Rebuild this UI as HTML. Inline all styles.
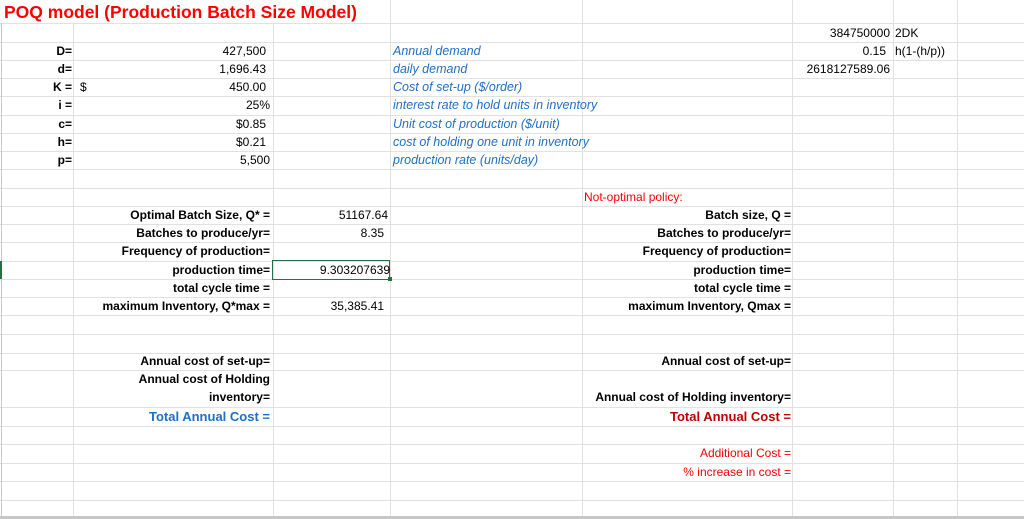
<!DOCTYPE html>
<html><head><meta charset="utf-8"><style>
body{margin:0;width:1024px;height:519px;overflow:hidden;background:#fff;font-family:"Liberation Sans",Arial,sans-serif;font-size:12px;color:#000;position:relative}
.h{position:absolute;left:0;width:1024px;height:1px;background:#e1e1e1}
.v{position:absolute;top:0;height:516px;width:1px;background:#e1e1e1}
.t{position:absolute;white-space:nowrap;line-height:19px;height:19px}
.r{text-align:right}
.b{font-weight:bold}
.i{font-style:italic;color:#1f6fc5;font-size:12.5px}
.red{color:#ff0000}
</style></head><body>
<div class="h" style="top:23px"></div><div class="h" style="top:42px"></div><div class="h" style="top:60px"></div><div class="h" style="top:78px"></div><div class="h" style="top:96px"></div><div class="h" style="top:115px"></div><div class="h" style="top:133px"></div><div class="h" style="top:151px"></div><div class="h" style="top:169px"></div><div class="h" style="top:188px"></div><div class="h" style="top:206px"></div><div class="h" style="top:224px"></div><div class="h" style="top:242px"></div><div class="h" style="top:261px"></div><div class="h" style="top:279px"></div><div class="h" style="top:297px"></div><div class="h" style="top:315px"></div><div class="h" style="top:334px"></div><div class="h" style="top:353px"></div><div class="h" style="top:370px"></div><div class="h" style="top:407px"></div><div class="h" style="top:426px"></div><div class="h" style="top:444px"></div><div class="h" style="top:463px"></div><div class="h" style="top:481px"></div><div class="h" style="top:500px"></div>
<div class="v" style="left:1px;background:#c8c8c8"></div><div class="v" style="left:73px"></div><div class="v" style="left:273px"></div><div class="v" style="left:390px"></div><div class="v" style="left:582px"></div><div class="v" style="left:792px"></div><div class="v" style="left:893px"></div><div class="v" style="left:957px"></div>
<div style="position:absolute;left:0;top:0;width:390px;height:23px;background:#fff"></div>
<div style="position:absolute;left:0;top:516px;width:1024px;height:3px;background:#c6c6c6"></div>
<div style="position:absolute;left:0;top:261px;width:2px;height:18px;background:#217346"></div>
<div class="t b red" style="left:4px;top:1px;font-size:17.5px;line-height:22px;height:22px">POQ model (Production Batch Size Model)</div>

<div class="t b r" style="right:952px;top:42px">D=</div>
<div class="t b r" style="right:952px;top:60px">d=</div>
<div class="t b r" style="right:952px;top:78px">K =</div>
<div class="t" style="left:80px;top:78px">$</div>
<div class="t b r" style="right:952px;top:96px">i =</div>
<div class="t b r" style="right:952px;top:115px">c=</div>
<div class="t b r" style="right:952px;top:133px">h=</div>
<div class="t b r" style="right:952px;top:151px">p=</div>
<div class="t r" style="right:758px;top:42px">427,500</div>
<div class="t r" style="right:758px;top:60px">1,696.43</div>
<div class="t r" style="right:758px;top:78px">450.00</div>
<div class="t r" style="right:754px;top:96px">25%</div>
<div class="t r" style="right:758px;top:115px">$0.85</div>
<div class="t r" style="right:758px;top:133px">$0.21</div>
<div class="t r" style="right:754px;top:151px">5,500</div>
<div class="t i" style="left:393px;top:42px">Annual demand</div>
<div class="t i" style="left:393px;top:60px">daily demand</div>
<div class="t i" style="left:393px;top:78px">Cost of set-up ($/order)</div>
<div class="t i" style="left:393px;top:96px">interest rate to hold units in inventory</div>
<div class="t i" style="left:393px;top:115px">Unit cost of production ($/unit)</div>
<div class="t i" style="left:393px;top:133px">cost of holding one unit in inventory</div>
<div class="t i" style="left:393px;top:151px">production rate (units/day)</div>
<div class="t r" style="right:134px;top:24px">384750000</div><div class="t" style="left:895px;top:24px">2DK</div>
<div class="t r" style="right:138px;top:42px">0.15</div><div class="t" style="left:895px;top:42px">h(1-(h/p))</div>
<div class="t r" style="right:134px;top:60px">2618127589.06</div>

<div class="t red" style="left:584px;top:188px">Not-optimal policy:</div>
<div class="t b r" style="right:754px;top:206px">Optimal Batch Size, Q* =</div>
<div class="t b r" style="right:754px;top:224px">Batches to produce/yr=</div>
<div class="t b r" style="right:754px;top:242px">Frequency of production=</div>
<div class="t b r" style="right:754px;top:261px">production time=</div>
<div class="t b r" style="right:754px;top:279px">total cycle time =</div>
<div class="t b r" style="right:754px;top:297px">maximum Inventory, Q*max =</div>
<div class="t r" style="right:636px;top:206px">51167.64</div>
<div class="t r" style="right:640px;top:224px">8.35</div>
<div style="position:absolute;left:272px;top:260px;width:116px;height:18px;border:1px solid #217346"></div>
<div style="position:absolute;left:388px;top:277px;width:4px;height:4px;background:#217346"></div>
<div class="t r" style="right:634px;top:261px">9.303207639</div>
<div class="t r" style="right:640px;top:297px">35,385.41</div>
<div class="t b r" style="right:233px;top:206px">Batch size, Q =</div>
<div class="t b r" style="right:233px;top:224px">Batches to produce/yr=</div>
<div class="t b r" style="right:233px;top:242px">Frequency of production=</div>
<div class="t b r" style="right:233px;top:261px">production time=</div>
<div class="t b r" style="right:233px;top:279px">total cycle time =</div>
<div class="t b r" style="right:233px;top:297px">maximum Inventory, Qmax =</div>

<div class="t b r" style="right:754px;top:352px">Annual cost of set-up=</div>
<div class="t b r" style="right:754px;top:370px">Annual cost of Holding</div>
<div class="t b r" style="right:754px;top:388px">inventory=</div>
<div class="t b r" style="right:754px;top:407px;color:#1f6fc5;font-size:13px">Total Annual Cost =</div>
<div class="t b r" style="right:233px;top:352px">Annual cost of set-up=</div>
<div class="t b r" style="right:233px;top:388px">Annual cost of Holding inventory=</div>
<div class="t b r" style="right:233px;top:407px;color:#c00000;font-size:13px">Total Annual Cost =</div>
<div class="t r red" style="right:233px;top:444px">Additional Cost =</div>
<div class="t r red" style="right:233px;top:463px">% increase in cost =</div>
</body></html>
